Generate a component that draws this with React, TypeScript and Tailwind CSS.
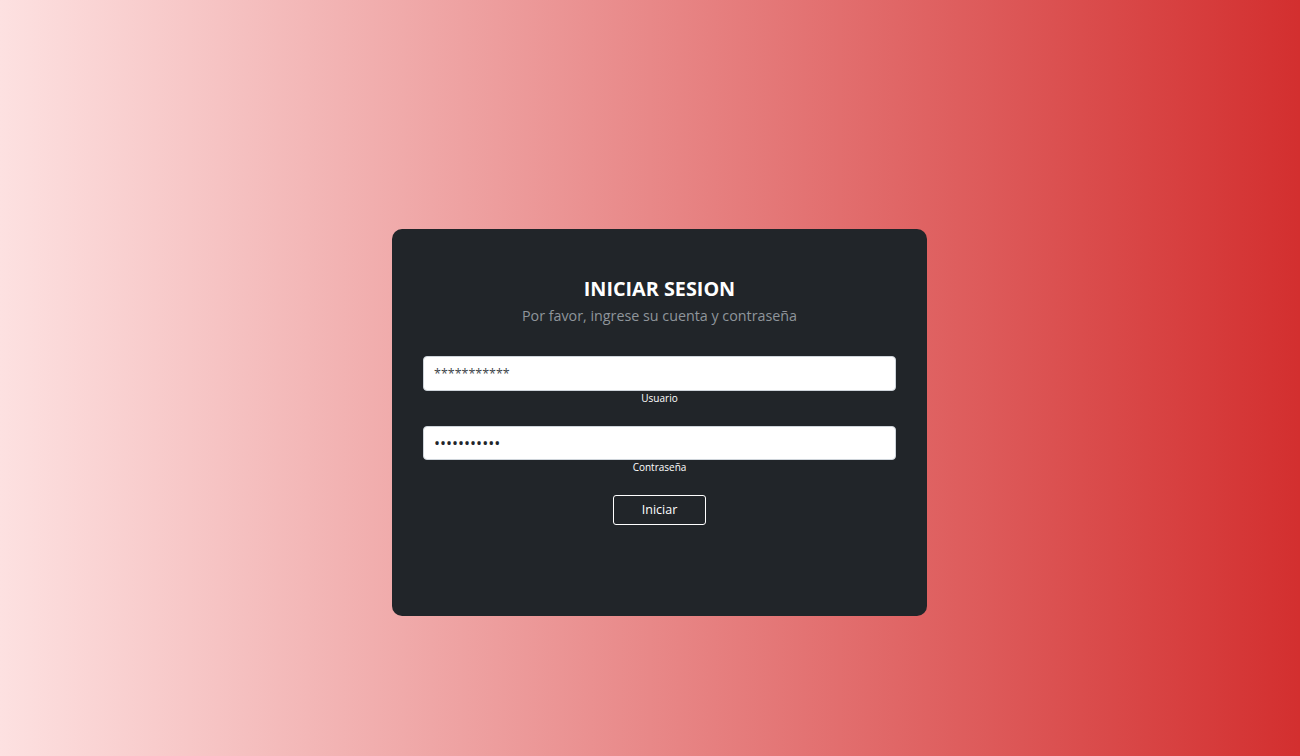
export default function App() {
  return (
    <div
      className="min-h-[756px] w-full flex justify-center items-start pt-[229px] pl-[19px] bg-[linear-gradient(to_right,#fde1e1,#d32f2f)]"
      style={{ fontFamily: '"Open Sans", "Noto Sans", sans-serif' }}
    >
      <div className="w-[535px] h-[387px] bg-[#212529] rounded-[10px] px-[31px] pt-[45px] flex flex-col items-center">
        <h2 className="text-white font-bold text-[19.8px] leading-[30px]">INICIAR SESION</h2>
        <p className="text-[#8f959b] text-[14.3px] leading-[22px] mt-[1px]">
          Por favor, ingrese su cuenta y contraseña
        </p>

        <div className="w-full mt-[29px] flex flex-col items-center">
          <input
            type="text"
            placeholder="***********"
            className="w-full h-[35px] rounded-[4px] bg-white border border-[#ced4da] px-[10px] text-[12.5px] text-[#212529] placeholder:text-[#3d4349] outline-none"
          />
          <label className="text-white text-[10px] leading-[12px] mt-[1px]">Usuario</label>
        </div>

        <div className="w-full mt-[22px] flex flex-col items-center">
          <input
            type="password"
            defaultValue="contrasenia"
            className="w-full h-[34px] rounded-[4px] bg-white border border-[#ced4da] px-[10px] text-[16px] text-[#212529] outline-none"
          />
          <label className="text-white text-[10px] leading-[12px] mt-[1px]">Contraseña</label>
        </div>

        <button className="mt-[22px] w-[93px] h-[30px] border border-white rounded-[3px] text-white text-[12.5px]">
          Iniciar
        </button>
      </div>
    </div>
  );
}
